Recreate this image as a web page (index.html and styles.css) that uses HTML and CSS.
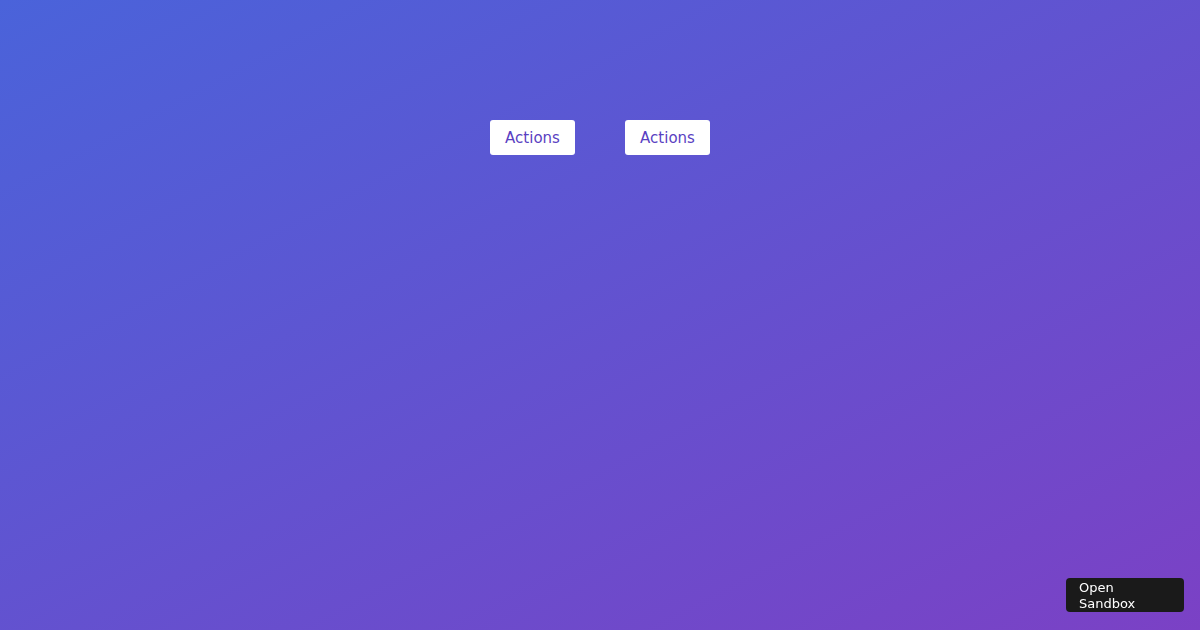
FILE: index.html
```html
<!DOCTYPE html>
<html lang="en">
<head>
  <meta charset="UTF-8" />
  <title>Actions</title>
  <link rel="stylesheet" href="styles.css">
</head>
<body>
  <div class="toolbar">
    <button class="action-btn">Actions</button>
    <button class="action-btn">Actions</button>
  </div>

  <a class="sandbox-link" href="#">Open Sandbox</a>
</body>
</html>
```

FILE: styles.css
```css
* {
  box-sizing: border-box;
}

html, body {
  margin: 0;
  padding: 0;
  height: 100%;
}

body {
  background: linear-gradient(to bottom right, #4a63da, #7b41c5);
  font-family: 'DejaVu Sans', sans-serif;
  overflow: hidden;
}

.toolbar {
  display: flex;
  justify-content: center;
  gap: 50px;
  padding-top: 120px;
}

.action-btn {
  width: 85px;
  height: 35px;
  padding: 0;
  background: #fff;
  color: #5a3fc2;
  border: none;
  border-radius: 3px;
  font-family: 'DejaVu Sans', sans-serif;
  font-size: 15px;
  cursor: pointer;
}

.sandbox-link {
  position: fixed;
  right: 16px;
  bottom: 18px;
  width: 118px;
  height: 34px;
  padding: 2px 13px 0;
  background: #1a1a1a;
  color: #fff;
  border-radius: 4px;
  font-size: 13px;
  line-height: 16px;
  text-decoration: none;
  word-spacing: 60px;
}
```
